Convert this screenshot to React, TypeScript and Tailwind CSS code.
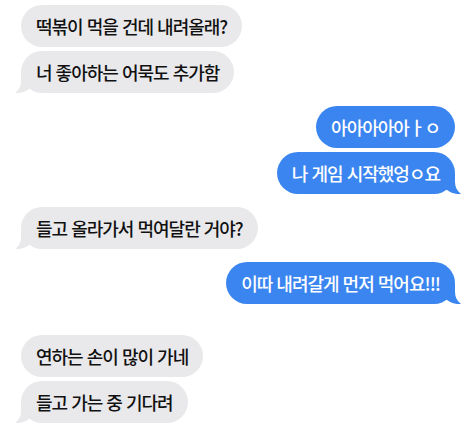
import React from "react";

type Msg = { text: string; me: boolean; tail: boolean; mt: string };

const msgs: Msg[] = [
  { text: "떡볶이 먹을 건데 내려올래?", me: false, tail: false, mt: "mt-[5px]" },
  { text: "너 좋아하는 어묵도 추가함", me: false, tail: true, mt: "mt-[4px]" },
  { text: "아아아아아ㅏㅇ", me: true, tail: false, mt: "mt-[13px]" },
  { text: "나 게임 시작했엉ㅇ요", me: true, tail: true, mt: "mt-[4px]" },
  { text: "들고 올라가서 먹여달란 거야?", me: false, tail: true, mt: "mt-[13px]" },
  { text: "이따 내려갈게 먼저 먹어요!!!", me: true, tail: true, mt: "mt-[13px]" },
  { text: "연하는 손이 많이 가네", me: false, tail: false, mt: "mt-[31px]" },
  { text: "들고 가는 중 기다려", me: false, tail: true, mt: "mt-[4px]" },
];

function Tail({ me }: { me: boolean }) {
  return (
    <svg
      width="22"
      height="20"
      viewBox="0 0 22 20"
      className={
        me
          ? "absolute bottom-0 right-[-6px] -scale-x-100"
          : "absolute bottom-0 left-[-6px]"
      }
    >
      <path
        d="M6 0 L6 8 C6 13 4 17 0 20 C5 20.5 10 19 14 16 L20 12 L20 0 Z"
        fill={me ? "#3a85f0" : "#e9e9eb"}
      />
    </svg>
  );
}

export default function App() {
  return (
    <div
      className="w-[474px] h-[429px] bg-white overflow-hidden flex flex-col"
      style={{ fontFamily: '"Noto Sans CJK KR", "Noto Sans", sans-serif' }}
    >
      {msgs.map((m, i) => (
        <div
          key={i}
          className={`flex ${m.me ? "justify-end pr-[19px]" : "justify-start pl-[21px]"} ${m.mt}`}
        >
          <div
            className={`relative h-[42px] flex items-center rounded-[21px] px-[15px] text-[18px] font-medium tracking-[-1px] [word-spacing:1px] ${
              m.me ? "bg-[#3a85f0] text-white" : "bg-[#e9e9eb] text-[#111]"
            }`}
          >
            {m.tail && <Tail me={m.me} />}
            <span className="relative">{m.text}</span>
          </div>
        </div>
      ))}
    </div>
  );
}
